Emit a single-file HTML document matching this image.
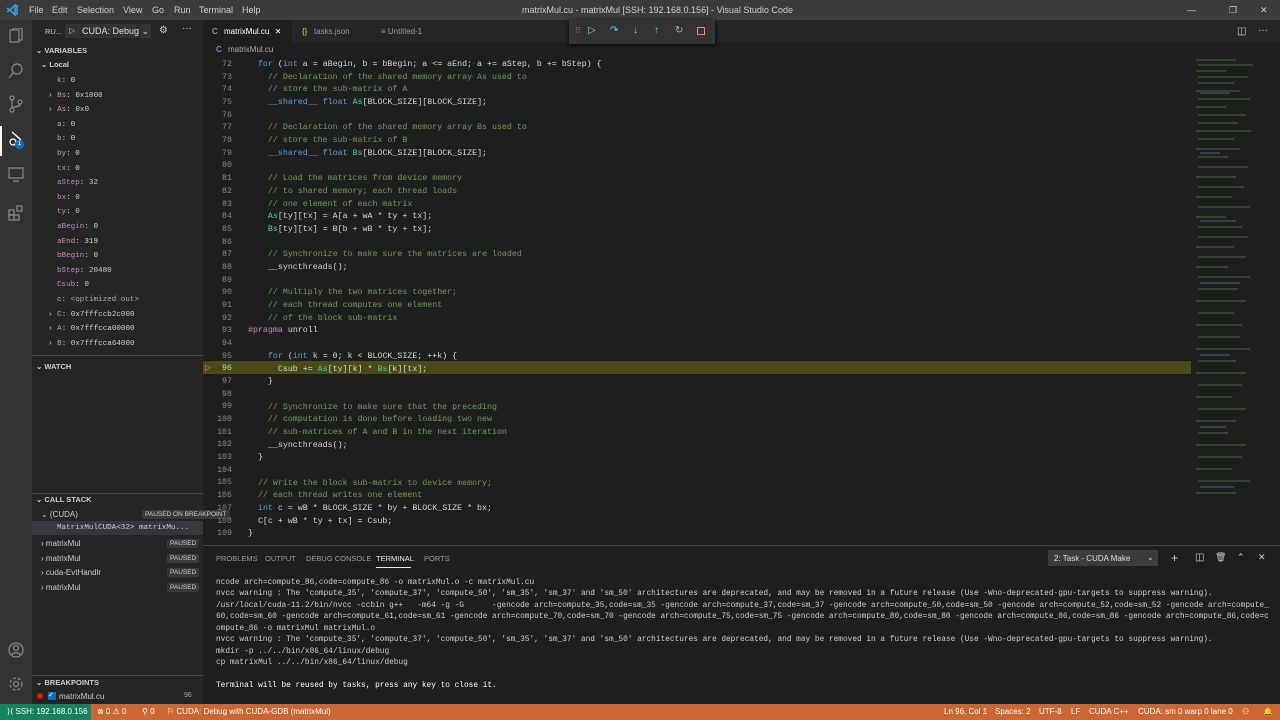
<!DOCTYPE html>
<html><head><meta charset="utf-8"><style>
*{margin:0;padding:0;box-sizing:border-box}
body{width:1280px;height:720px;overflow:hidden;background:#1e1e1e;font-family:"Liberation Sans",sans-serif;color:#ccc;position:relative;font-size:9px}
.abs{position:absolute}
#title{left:0;top:0;width:1280px;height:20px;background:#3c3c3c;}
#title span{position:absolute;top:5px;font-size:9px;color:#ccc}
#act{left:0;top:20px;width:32px;height:684px;background:#333}
#side{left:32px;top:20px;width:171px;height:684px;background:#252526}
.sv{position:absolute;font-size:8px;white-space:nowrap}
.mono{font-family:"Liberation Mono",monospace}
.hdr{font-weight:bold;font-size:7.5px;color:#ccc}
.badge{position:absolute;background:#3a3a3a;color:#ccc;font-size:6.5px;padding:1px 3px;border-radius:2px;white-space:nowrap}
#tabs{left:203px;top:20px;width:1077px;height:22px;background:#252526}
#code{left:203px;top:59px;font-family:"Liberation Mono",monospace;font-size:8.3px;line-height:12.68px;white-space:pre;color:#d4d4d4}
.ln{position:absolute;left:0;width:29px;text-align:right;color:#858585}
.k{color:#569cd6}.c{color:#6a9955}.t{color:#4ec9b0}.p{color:#c586c0}
#panel{left:203px;top:545px;width:1077px;height:159px;background:#1e1e1e;border-top:1px solid #444}
#term{left:216px;top:578px;font-family:"Liberation Mono",monospace;font-size:7.8px;line-height:11.44px;white-space:pre;color:#ccc}
#status{left:0;top:704px;width:1280px;height:16px;background:#cc6633;color:#fff;font-size:8px}
#status span{position:absolute;top:3px;white-space:nowrap}
</style></head><body>
<div id="title" class="abs">
<svg style="position:absolute;left:6px;top:4px" width="12" height="12" viewBox="0 0 12 12"><path d="M9 1L4 6l5 5V1zM9 1l2 1v8l-2 1M1 4l3 2-3 2" fill="none" stroke="#3a96dd" stroke-width="1.6"/></svg>
<span style="left:29px">File</span><span style="left:52px">Edit</span><span style="left:77px">Selection</span><span style="left:123px">View</span><span style="left:152px">Go</span><span style="left:174px">Run</span><span style="left:199px">Terminal</span><span style="left:242px">Help</span>
<span style="left:522px">matrixMul.cu - matrixMul [SSH: 192.168.0.156] - Visual Studio Code</span>
<span style="left:1187px">—</span><span style="left:1229px">❐</span><span style="left:1260px">✕</span>
</div>
<div id="act" class="abs">
<svg class="abs" style="left:8px;top:8px" width="16" height="170" viewBox="0 0 16 170" fill="none" stroke="#858585" stroke-width="1.3">
<rect x="2" y="2" width="9" height="12"/><path d="M5 2V0h9v12h-3"/>
<circle cx="9" cy="41" r="5"/><path d="M5 45l-4 5"/>
<circle cx="4" cy="70" r="2"/><circle cx="4" cy="82" r="2"/><circle cx="12" cy="74" r="2"/><path d="M4 72v8M12 76c0 4-8 2-8 4"/>
<rect x="1" y="140" width="14" height="10"/><path d="M5 153h6"/>
<rect x="1" y="178" width="6" height="6"/>
</svg>
<div class="abs" style="left:0;top:106px;width:2px;height:30px;background:#fff"></div>
<svg class="abs" style="left:8px;top:111px" width="16" height="16" viewBox="0 0 16 16" fill="none" stroke="#fff" stroke-width="1.3"><path d="M4 1l9 8"/><circle cx="5" cy="11" r="3"/></svg>
<div class="abs" style="left:15px;top:120px;width:9px;height:9px;border-radius:50%;background:#0e70c0;color:#fff;font-size:6px;text-align:center;line-height:9px">1</div>
<svg class="abs" style="left:8px;top:185px" width="16" height="16" viewBox="0 0 16 16" fill="none" stroke="#858585" stroke-width="1.3"><rect x="1" y="5" width="5" height="5"/><rect x="6" y="10" width="5" height="5"/><rect x="1" y="10" width="5" height="5"/><rect x="9" y="1" width="5" height="5"/></svg>
<svg class="abs" style="left:8px;top:622px" width="16" height="16" viewBox="0 0 16 16" fill="none" stroke="#858585" stroke-width="1.3"><circle cx="8" cy="8" r="7"/><circle cx="8" cy="6" r="2.5"/><path d="M3.5 13c2-3 7-3 9 0"/></svg>
<svg class="abs" style="left:8px;top:656px" width="16" height="16" viewBox="0 0 16 16" fill="none" stroke="#858585" stroke-width="1.3"><circle cx="8" cy="8" r="2.5"/><circle cx="8" cy="8" r="6" stroke-dasharray="3 2"/></svg>
</div>
<div id="side" class="abs">
<div class="sv" style="left:13px;top:7px;font-size:7.5px">RU...</div>
<div class="abs" style="left:33px;top:4px;width:86px;height:14px;background:#333"></div>
<div class="sv" style="left:37px;top:6px;color:#89d185">▷</div>
<div class="sv" style="left:50px;top:6px;font-size:9px;color:#ddd">CUDA: Debug ⌄</div>
<div class="sv" style="left:127px;top:5px;font-size:10px">⚙</div>
<div class="sv" style="left:150px;top:3px;font-size:10px">···</div>
<div class="sv hdr" style="left:4px;top:26px">⌄ VARIABLES</div>
<div class="sv hdr" style="left:9px;top:40px">⌄ Local</div>
<div class="sv mono" style="left:25px;top:54px;line-height:14.6px;font-size:7.6px;color:#c586c0">k<span style="color:#ccc">: 0</span><br><span style="margin-left:-9px;color:#ccc">›</span> Bs<span style="color:#ccc">: 0x1000</span><br><span style="margin-left:-9px;color:#ccc">›</span> As<span style="color:#ccc">: 0x0</span><br>a<span style="color:#ccc">: 0</span><br>b<span style="color:#ccc">: 0</span><br>by<span style="color:#ccc">: 0</span><br>tx<span style="color:#ccc">: 0</span><br>aStep<span style="color:#ccc">: 32</span><br>bx<span style="color:#ccc">: 0</span><br>ty<span style="color:#ccc">: 0</span><br>aBegin<span style="color:#ccc">: 0</span><br>aEnd<span style="color:#ccc">: 319</span><br>bBegin<span style="color:#ccc">: 0</span><br>bStep<span style="color:#ccc">: 20480</span><br>Csub<span style="color:#ccc">: 0</span><br><span style="color:#aaa">c: &lt;optimized out&gt;</span><br><span style="margin-left:-9px;color:#ccc">›</span> C<span style="color:#ccc">: 0x7fffccb2c000</span><br><span style="margin-left:-9px;color:#ccc">›</span> A<span style="color:#ccc">: 0x7fffcca00000</span><br><span style="margin-left:-9px;color:#ccc">›</span> B<span style="color:#ccc">: 0x7fffcca64000</span></div>
<div class="abs" style="left:0;top:335px;width:171px;height:1px;background:#444"></div>
<div class="sv hdr" style="left:4px;top:342px">⌄ WATCH</div>
<div class="abs" style="left:0;top:473px;width:171px;height:1px;background:#444"></div>
<div class="sv hdr" style="left:4px;top:475px">⌄ CALL STACK</div>
<div class="sv" style="left:9px;top:490px">⌄ (CUDA)</div>
<div class="badge" style="left:110px;top:490px">PAUSED ON BREAKPOINT</div>
<div class="abs" style="left:0;top:501px;width:171px;height:14px;background:#37373d"></div>
<div class="sv mono" style="left:25px;top:504px;font-size:7.6px">MatrixMulCUDA&lt;32&gt;  matrixMu...</div>
<div class="sv" style="left:9px;top:519px">›  matrixMul</div><div class="badge" style="left:135px;top:519px">PAUSED</div>
<div class="sv" style="left:9px;top:534px">›  matrixMul</div><div class="badge" style="left:135px;top:534px">PAUSED</div>
<div class="sv" style="left:9px;top:548px">›  cuda-EvtHandlr</div><div class="badge" style="left:135px;top:548px">PAUSED</div>
<div class="sv" style="left:9px;top:563px">›  matrixMul</div><div class="badge" style="left:135px;top:563px">PAUSED</div>
<div class="abs" style="left:0;top:655px;width:171px;height:1px;background:#444"></div>
<div class="sv hdr" style="left:4px;top:658px">⌄ BREAKPOINTS</div>
<div class="abs" style="left:5px;top:673px;width:6px;height:6px;border-radius:50%;background:#e51400"></div>
<div class="abs" style="left:16px;top:672px;width:8px;height:8px;background:#0e70c0;color:#fff;font-size:7px;line-height:8px">✓</div>
<div class="sv" style="left:27px;top:672px">matrixMul.cu</div>
<div class="sv" style="left:152px;top:672px;color:#aaa;font-size:7px">96</div>
</div>
<div id="tabs" class="abs">
<div class="abs" style="left:0;top:0;width:89px;height:22px;background:#1e1e1e"></div>
<div class="sv" style="left:9px;top:7px;color:#a074c4;font-weight:bold">C</div>
<div class="sv" style="left:21px;top:7px;color:#fff">matrixMul.cu <span style="margin-left:3px">✕</span></div>
<div class="sv" style="left:99px;top:7px;color:#cbcb41">{}</div>
<div class="sv" style="left:111px;top:7px;color:#999">tasks.json</div>
<div class="sv" style="left:178px;top:7px;color:#999">≡ Untitled-1</div>
<div class="abs" style="left:366px;top:0;width:146px;height:24px;background:#333;box-shadow:0 1px 4px #000"></div>
<div class="sv" style="left:372px;top:6px;color:#777">⠿</div>
<div class="sv" style="left:385px;top:5px;color:#75beff;font-size:10px">▷</div>
<div class="sv" style="left:407px;top:5px;color:#75beff;font-size:10px">↷</div>
<div class="sv" style="left:430px;top:5px;color:#75beff;font-size:10px">↓</div>
<div class="sv" style="left:451px;top:5px;color:#75beff;font-size:10px">↑</div>
<div class="sv" style="left:472px;top:5px;color:#89d185;font-size:10px">↻</div>
<div class="abs" style="left:494px;top:7px;width:8px;height:8px;border:1px solid #f48771"></div>
<div class="sv" style="left:1034px;top:6px;font-size:10px">◫</div>
<div class="sv" style="left:1055px;top:5px;font-size:10px">···</div>
</div>
<div class="sv" style="left:216px;top:45px;color:#a074c4;font-weight:bold">C</div>
<div class="sv" style="left:228px;top:45px;color:#aaa">matrixMul.cu</div>
<div class="abs" style="left:203px;top:361px;width:988px;height:13px;background:#4b4b18"></div>
<div class="abs" style="left:205px;top:363px;color:#f48771;font-size:8px">▷</div>
<div id="code" class="abs"><span class="ln" style="top:0">72</span><span class="ln" style="top:12.68px">73</span><span class="ln" style="top:25.36px">74</span><span class="ln" style="top:38px">75</span><span class="ln" style="top:50.7px">76</span><span class="ln" style="top:63.4px">77</span><span class="ln" style="top:76.1px">78</span><span class="ln" style="top:88.8px">79</span><span class="ln" style="top:101.4px">80</span><span class="ln" style="top:114.1px">81</span><span class="ln" style="top:126.8px">82</span><span class="ln" style="top:139.5px">83</span><span class="ln" style="top:152.2px">84</span><span class="ln" style="top:164.8px">85</span><span class="ln" style="top:177.5px">86</span><span class="ln" style="top:190.2px">87</span><span class="ln" style="top:202.9px">88</span><span class="ln" style="top:215.6px">89</span><span class="ln" style="top:228.2px">90</span><span class="ln" style="top:240.9px">91</span><span class="ln" style="top:253.6px">92</span><span class="ln" style="top:266.3px">93</span><span class="ln" style="top:279px">94</span><span class="ln" style="top:291.6px">95</span><span class="ln" style="top:304.3px;color:#c6c6c6">96</span><span class="ln" style="top:317px">97</span><span class="ln" style="top:329.7px">98</span><span class="ln" style="top:342.4px">99</span><span class="ln" style="top:355px">100</span><span class="ln" style="top:367.7px">101</span><span class="ln" style="top:380.4px">102</span><span class="ln" style="top:393.1px">103</span><span class="ln" style="top:405.8px">104</span><span class="ln" style="top:418.4px">105</span><span class="ln" style="top:431.1px">106</span><span class="ln" style="top:443.8px">107</span><span class="ln" style="top:456.5px">108</span><span class="ln" style="top:469.2px">109</span><div style="position:absolute;left:45px;top:0"><span class="k">  for</span> (<span class="k">int</span> a = aBegin, b = bBegin; a &lt;= aEnd; a += aStep, b += bStep) {
<span class="c">    // Declaration of the shared memory array As used to</span>
<span class="c">    // store the sub-matrix of A</span>
    <span class="k">__shared__</span> <span class="k">float</span> <span class="t">As</span>[BLOCK_SIZE][BLOCK_SIZE];

<span class="c">    // Declaration of the shared memory array Bs used to</span>
<span class="c">    // store the sub-matrix of B</span>
    <span class="k">__shared__</span> <span class="k">float</span> <span class="t">Bs</span>[BLOCK_SIZE][BLOCK_SIZE];

<span class="c">    // Load the matrices from device memory</span>
<span class="c">    // to shared memory; each thread loads</span>
<span class="c">    // one element of each matrix</span>
    <span class="t">As</span>[ty][tx] = A[a + wA * ty + tx];
    <span class="t">Bs</span>[ty][tx] = B[b + wB * ty + tx];

<span class="c">    // Synchronize to make sure the matrices are loaded</span>
    __syncthreads();

<span class="c">    // Multiply the two matrices together;</span>
<span class="c">    // each thread computes one element</span>
<span class="c">    // of the block sub-matrix</span>
<span class="p">#pragma</span> unroll

    <span class="k">for</span> (<span class="k">int</span> k = 0; k &lt; BLOCK_SIZE; ++k) {
      Csub += <span class="t">As</span>[ty][k] * <span class="t">Bs</span>[k][tx];
    }

<span class="c">    // Synchronize to make sure that the preceding</span>
<span class="c">    // computation is done before loading two new</span>
<span class="c">    // sub-matrices of A and B in the next iteration</span>
    __syncthreads();
  }

<span class="c">  // Write the block sub-matrix to device memory;</span>
<span class="c">  // each thread writes one element</span>
  <span class="k">int</span> c = wB * BLOCK_SIZE * by + BLOCK_SIZE * bx;
  C[c + wB * ty + tx] = Csub;
}</div></div>
<svg class="abs" style="left:1194px;top:57px" width="80" height="445" viewBox="0 0 80 445">
<g stroke-width="1.2" opacity="0.45">
<path d="M2 3h40M4 8h55M2 14h30M4 20h50M4 26h36M2 34h44M4 42h52M2 50h30M4 58h48M4 66h40M2 74h55M4 82h36M2 92h44M4 100h30M4 110h50M2 120h40M4 130h46M2 140h36M4 150h52M2 160h30M4 170h44M4 180h50M2 190h38M4 200h48M2 210h32M4 220h52M4 232h40M2 244h50M4 256h36M2 268h46M4 280h42M2 292h54M4 304h38M2 316h50M4 328h44M2 340h36M4 352h48M2 364h40M4 376h30M2 388h50M4 400h44M2 412h36M4 424h52M2 436h40" stroke="#6a9955"/>
<path d="M6 36h30M6 96h20M6 164h36M6 226h40M6 298h30M6 370h26M6 430h34" stroke="#569cd6"/>
</g></svg>
<div id="panel" class="abs">
<div class="sv" style="left:13px;top:8px;color:#999;font-size:7.5px">PROBLEMS</div>
<div class="sv" style="left:62px;top:8px;color:#999;font-size:7.5px">OUTPUT</div>
<div class="sv" style="left:103px;top:8px;color:#999;font-size:7.5px">DEBUG CONSOLE</div>
<div class="sv" style="left:173px;top:8px;color:#e7e7e7;font-size:7.5px">TERMINAL</div>
<div class="abs" style="left:173px;top:21px;width:35px;height:1px;background:#e7e7e7"></div>
<div class="sv" style="left:221px;top:8px;color:#999;font-size:7.5px">PORTS</div>
<div class="abs" style="left:845px;top:4px;width:110px;height:16px;background:#3c3c3c"></div>
<div class="sv" style="left:851px;top:8px;color:#ddd">2: Task - CUDA Make</div>
<div class="sv" style="left:944px;top:7px;">⌄</div>
<div class="sv" style="left:968px;top:5px;font-size:12px">+</div>
<div class="sv" style="left:992px;top:6px;font-size:10px">◫</div>
<div class="sv" style="left:1012px;top:6px;font-size:9px">🗑</div>
<div class="sv" style="left:1034px;top:6px;font-size:9px">⌃</div>
<div class="sv" style="left:1055px;top:6px;font-size:9px">✕</div>
</div>
<div id="term" class="abs">ncode arch=compute_86,code=compute_86 -o matrixMul.o -c matrixMul.cu
nvcc warning : The 'compute_35', 'compute_37', 'compute_50', 'sm_35', 'sm_37' and 'sm_50' architectures are deprecated, and may be removed in a future release (Use -Wno-deprecated-gpu-targets to suppress warning).
/usr/local/cuda-11.2/bin/nvcc -ccbin g++   -m64 -g -G      -gencode arch=compute_35,code=sm_35 -gencode arch=compute_37,code=sm_37 -gencode arch=compute_50,code=sm_50 -gencode arch=compute_52,code=sm_52 -gencode arch=compute_
60,code=sm_60 -gencode arch=compute_61,code=sm_61 -gencode arch=compute_70,code=sm_70 -gencode arch=compute_75,code=sm_75 -gencode arch=compute_80,code=sm_80 -gencode arch=compute_86,code=sm_86 -gencode arch=compute_86,code=c
ompute_86 -o matrixMul matrixMul.o
nvcc warning : The 'compute_35', 'compute_37', 'compute_50', 'sm_35', 'sm_37' and 'sm_50' architectures are deprecated, and may be removed in a future release (Use -Wno-deprecated-gpu-targets to suppress warning).
mkdir -p ../../bin/x86_64/linux/debug
cp matrixMul ../../bin/x86_64/linux/debug

<span style="color:#fff">Terminal will be reused by tasks, press any key to close it.</span></div>
<div id="status" class="abs">
<div class="abs" style="left:0;top:0;width:91px;height:16px;background:#16825d"></div>
<span style="left:7px">⟩⟨ SSH: 192.168.0.156</span>
<span style="left:97px">⊗ 0 ⚠ 0</span>
<span style="left:142px">⚲ 0</span>
<span style="left:167px">⚐ CUDA: Debug with CUDA-GDB (matrixMul)</span>
<span style="left:944px">Ln 96, Col 1</span>
<span style="left:995px">Spaces: 2</span>
<span style="left:1039px">UTF-8</span>
<span style="left:1071px">LF</span>
<span style="left:1089px">CUDA C++</span>
<span style="left:1138px">CUDA: sm 0 warp 0 lane 0</span>
<span style="left:1242px">⚇</span>
<span style="left:1263px">🔔</span>
</div>
</body></html>
